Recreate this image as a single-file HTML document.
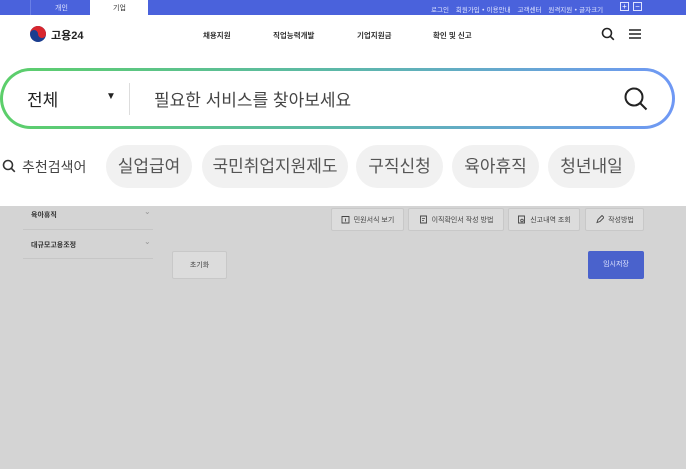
<!DOCTYPE html>
<html><head><meta charset="utf-8"><style>
*{margin:0;padding:0;box-sizing:border-box}
body{width:686px;height:469px;overflow:hidden;background:#d4d4d4;font-family:"Liberation Sans","Noto Sans CJK KR",sans-serif;position:relative}
.a{position:absolute}
.top{left:0;top:0;width:686px;height:15px;background:#4a62dc}
.t{font-size:7px;color:#dfe4ff;top:3px}
.white{left:0;top:15px;width:686px;height:191px;background:#fff}
.nav{font-size:7.5px;color:#333;top:30px;font-weight:bold}
.sb{left:0;top:68px;width:675px;height:61px;border-radius:31px;padding:3px;background:linear-gradient(90deg,#5ccf6a,#5cb8a8 50%,#6f98f5)}
.sbi{width:100%;height:100%;background:#fff;border-radius:28px;position:relative}
.pill{top:145px;height:43px;border-radius:22px;background:#f1f1f1;font-size:17px;color:#555;line-height:43px;text-align:center}
.btn{background:#dcdcdc;border:1px solid #c8c8c8;border-radius:2px;font-size:7px;color:#444;text-align:center;display:flex;align-items:center;justify-content:center;gap:4px}
.side{font-size:7px;color:#333;left:31px;font-weight:bold}
.ln{left:23px;width:130px;height:1px;background:#c6c6c6}
</style></head><body>
<div class="a top"></div>
<div class="a" style="left:30px;top:0;width:1px;height:15px;background:#6a7fe6"></div>
<div class="a t" style="left:55px">개인</div>
<div class="a" style="left:90px;top:0;width:58px;height:16px;background:#fff"></div>
<div class="a t" style="left:113px;color:#333">기업</div>
<div class="a t" style="left:431px;font-size:6.5px;top:4px;word-spacing:0.5px;white-space:nowrap">로그인 &nbsp; 회원가입 • 이용안내 &nbsp; 고객센터 &nbsp; 원격지원 • 글자크기</div>
<div class="a" style="left:620px;top:2px;width:9px;height:9px;border:1px solid #dfe4ff;color:#fff;font-size:8px;line-height:7px;text-align:center;background:#4a62dc">+</div>
<div class="a" style="left:633px;top:2px;width:9px;height:9px;border:1px solid #dfe4ff;color:#fff;font-size:8px;line-height:7px;text-align:center">−</div>
<div class="a white"></div>
<svg class="a" style="left:30px;top:26px" width="16" height="16" viewBox="0 0 16 16"><circle cx="8" cy="8" r="8" fill="#1a3d8f"/><path d="M0 8a8 8 0 0 1 16 0a4 4 0 0 1-8 0a4 4 0 0 0-8 0z" fill="#d8262e"/></svg>
<div class="a" style="left:51px;top:27px;font-size:11px;font-weight:bold;color:#222">고용24</div>
<div class="a nav" style="left:203px">채용지원</div>
<div class="a nav" style="left:273px">직업능력개발</div>
<div class="a nav" style="left:357px">기업지원금</div>
<div class="a nav" style="left:433px">확인 및 신고</div>
<svg class="a" style="left:601px;top:27px" width="14" height="14" viewBox="0 0 14 14"><circle cx="6" cy="6" r="4.5" fill="none" stroke="#222" stroke-width="1.6"/><path d="M9.3 9.3l3.5 3.5" stroke="#222" stroke-width="1.6"/></svg>
<svg class="a" style="left:628px;top:28px" width="14" height="12" viewBox="0 0 14 12"><path d="M1 2h12M1 6h12M1 10h12" stroke="#222" stroke-width="1.5"/></svg>
<div class="a sb"><div class="sbi">
<div class="a" style="left:24px;top:15px;font-size:17px;color:#222">전체</div>
<div class="a" style="left:103px;top:20px;font-size:10px;color:#222">▼</div>
<div class="a" style="left:126px;top:12px;width:1px;height:32px;background:#ddd"></div>
<div class="a" style="left:151px;top:15px;font-size:17px;color:#444">필요한 서비스를 찾아보세요</div>
<svg class="a" style="left:620px;top:15px" width="26" height="26" viewBox="0 0 26 26"><circle cx="11" cy="11" r="8.5" fill="none" stroke="#222" stroke-width="2"/><path d="M17.5 17.5l6 6" stroke="#222" stroke-width="2"/></svg>
</div></div>
<svg class="a" style="left:2px;top:159px" width="14" height="14" viewBox="0 0 14 14"><circle cx="6" cy="6" r="4.5" fill="none" stroke="#333" stroke-width="1.6"/><path d="M9.3 9.3l3.5 3.5" stroke="#333" stroke-width="1.6"/></svg>
<div class="a" style="left:22px;top:157px;font-size:14px;color:#444">추천검색어</div>
<div class="a pill" style="left:106px;width:86px">실업급여</div>
<div class="a pill" style="left:202px;width:146px">국민취업지원제도</div>
<div class="a pill" style="left:356px;width:87px">구직신청</div>
<div class="a pill" style="left:452px;width:87px">육아휴직</div>
<div class="a pill" style="left:548px;width:87px">청년내일</div>
<div class="a side" style="top:210px">육아휴직</div><div class="a" style="left:144px;top:207px;font-size:8px;color:#999">⌄</div>
<div class="a ln" style="top:229px"></div>
<div class="a side" style="top:240px">대규모고용조정</div><div class="a" style="left:144px;top:237px;font-size:8px;color:#999">⌄</div>
<div class="a ln" style="top:258px"></div>
<div class="a btn" style="left:331px;top:208px;width:73px;height:23px"><svg width="9" height="9" viewBox="0 0 9 9"><path d="M1 1.5h7v6.5h-7z" fill="none" stroke="#444" stroke-width=".9"/><path d="M4.5 3.5v3" stroke="#444" stroke-width=".9"/></svg>민원서식 보기</div>
<div class="a btn" style="left:408px;top:208px;width:96px;height:23px"><svg width="9" height="9" viewBox="0 0 9 9"><path d="M1.5 1h6v7h-6z" fill="none" stroke="#444" stroke-width=".9"/><path d="M3 3.5h3M3 5.5h2" stroke="#444" stroke-width=".8"/></svg>이직확인서 작성 방법</div>
<div class="a btn" style="left:508px;top:208px;width:72px;height:23px"><svg width="9" height="9" viewBox="0 0 9 9"><path d="M1.5 1h6v7h-6z" fill="none" stroke="#444" stroke-width=".9"/><circle cx="5" cy="5.5" r="1.3" fill="none" stroke="#444" stroke-width=".8"/></svg>신고내역 조회</div>
<div class="a btn" style="left:585px;top:208px;width:59px;height:23px"><svg width="9" height="9" viewBox="0 0 9 9"><path d="M2 7.5l1-3 4-4 2 2-4 4z" fill="none" stroke="#444" stroke-width=".9"/></svg>작성방법</div>
<div class="a btn" style="left:172px;top:251px;width:55px;height:28px">초기화</div>
<div class="a" style="left:588px;top:251px;width:56px;height:28px;background:#4a62cc;border-radius:2px;font-size:7px;color:#dfe4ff;text-align:center;line-height:28px">임시저장</div>
</body></html>
